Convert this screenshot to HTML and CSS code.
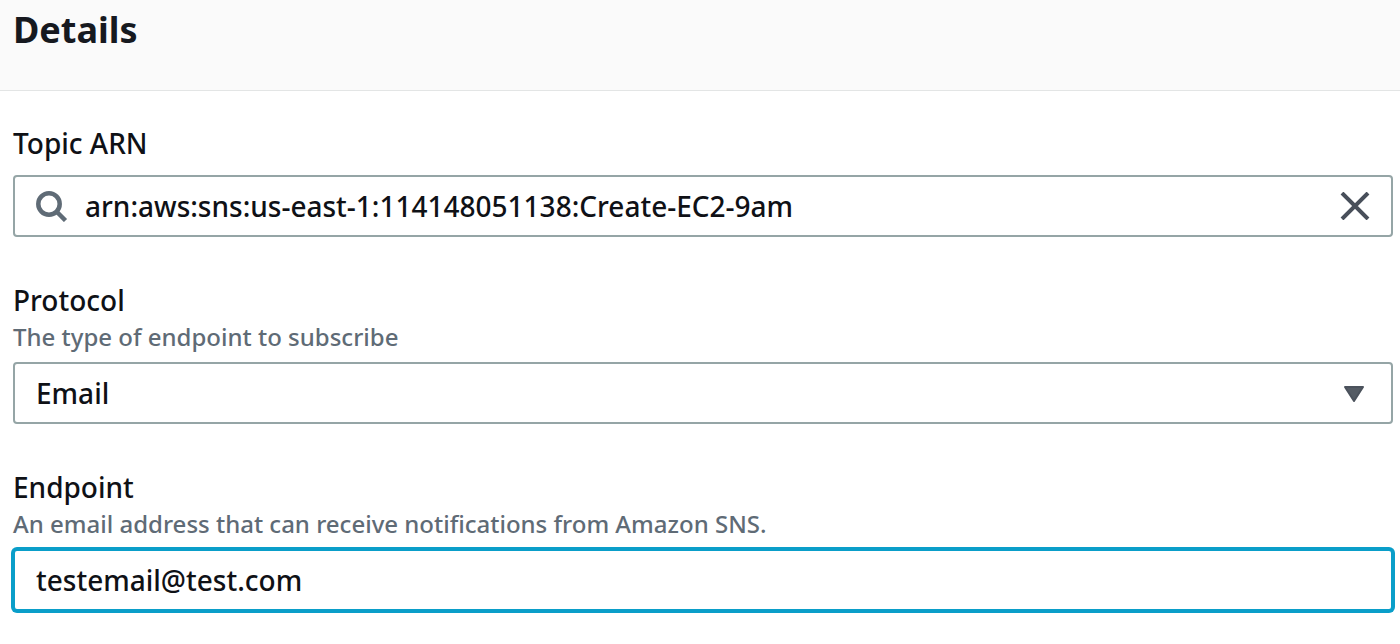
FILE: index.html
```html
<!DOCTYPE html>
<html lang="en">
<head>
  <meta charset="UTF-8" />
  <meta name="viewport" content="width=device-width, initial-scale=1.0"/>
  <title>Create subscription</title>
  <link rel="stylesheet" href="styles.css">
</head>
<body>
  <header class="panel-header">
    <h2>Details</h2>
  </header>

  <form class="panel-body">
    <!-- Topic ARN -->
    <div class="field">
      <label for="topicArn">Topic ARN</label>
      <div class="control search">
        <svg class="icon-search" viewBox="0 0 32 32" aria-hidden="true">
          <circle cx="13" cy="14" r="10.7"/>
          <path d="M20.5 21.5L29.5 30.5"/>
        </svg>
        <input type="text" id="topicArn" value="arn:aws:sns:us-east-1:114148051138:Create-EC2-9am">
        <button type="button" class="clear" aria-label="Clear">
          <svg viewBox="0 0 28 28" aria-hidden="true">
            <path d="M1 1L27 27M27 1L1 27"/>
          </svg>
        </button>
      </div>
    </div>

    <!-- Protocol -->
    <div class="field">
      <label for="protocol">Protocol</label>
      <p class="hint" id="protocolHint">The type of endpoint to subscribe</p>
      <div class="control">
        <select id="protocol" aria-describedby="protocolHint">
          <option>Email</option>
        </select>
        <svg class="icon-caret" viewBox="0 0 22 20" aria-hidden="true">
          <path d="M2 4H20L11 18Z"/>
        </svg>
      </div>
    </div>

    <!-- Endpoint -->
    <div class="field">
      <label for="endpoint">Endpoint</label>
      <p class="hint" id="endpointHint">An email address that can receive notifications from Amazon SNS.</p>
      <div class="control active">
        <input type="text" id="endpoint" value="testemail@test.com" aria-describedby="endpointHint">
      </div>
    </div>
  </form>
</body>
</html>
```
FILE: styles.css
```css
* {
  box-sizing: border-box;
}

body {
  margin: 0;
  background-color: #fff;
  color: #0f1116;
  font-family: "Noto Sans", "Open Sans", sans-serif;
  font-size: 28px;
  font-weight: 500;
  line-height: 36px;
}

.panel-header {
  padding: 6px 13px 36px;
  background-color: #fafafa;
  border-bottom: 1px solid #e3e5e5;
}

h2 {
  margin: 0;
  font-size: 36px;
  line-height: 48px;
  font-weight: 700;
  color: #16191f;
}

.panel-body {
  display: flex;
  flex-direction: column;
  gap: 45px;
  padding: 34px 7px 33px 13px;
}

.field label {
  display: block;
}

.hint {
  margin: 0;
  font-size: 24px;
  line-height: 38px;
  color: #5f6b76;
}

.control {
  display: flex;
  align-items: center;
  height: 62px;
  margin-top: 6px;
  padding: 0 21px;
  background-color: #fff;
  border: 2px solid #95a5a6;
  border-radius: 4px;
}

.control.search {
  gap: 17px;
  margin-top: 14px;
}

.control.active {
  border-color: #0a9ec9;
  box-shadow: 0 0 0 2px #0a9ec9;
}

.control input,
.control select {
  flex: 1;
  min-width: 0;
  padding: 0;
  border: 0;
  outline: 0;
  background: none;
  color: inherit;
  font: inherit;
  appearance: none;
}

.icon-search {
  width: 32px;
  height: 32px;
  fill: none;
  stroke: #5f6b76;
  stroke-width: 4.5;
}

.clear {
  display: flex;
  padding: 0;
  border: 0;
  background: none;
  cursor: pointer;
}

.clear svg {
  width: 30px;
  height: 28px;
  fill: none;
  stroke: #484f5a;
  stroke-width: 4;
}

.icon-caret {
  width: 22px;
  height: 20px;
  margin-right: 5px;
  fill: #545b64;
  stroke: #4b525c;
  stroke-width: 2;
  stroke-linejoin: round;
  pointer-events: none;
}
```
